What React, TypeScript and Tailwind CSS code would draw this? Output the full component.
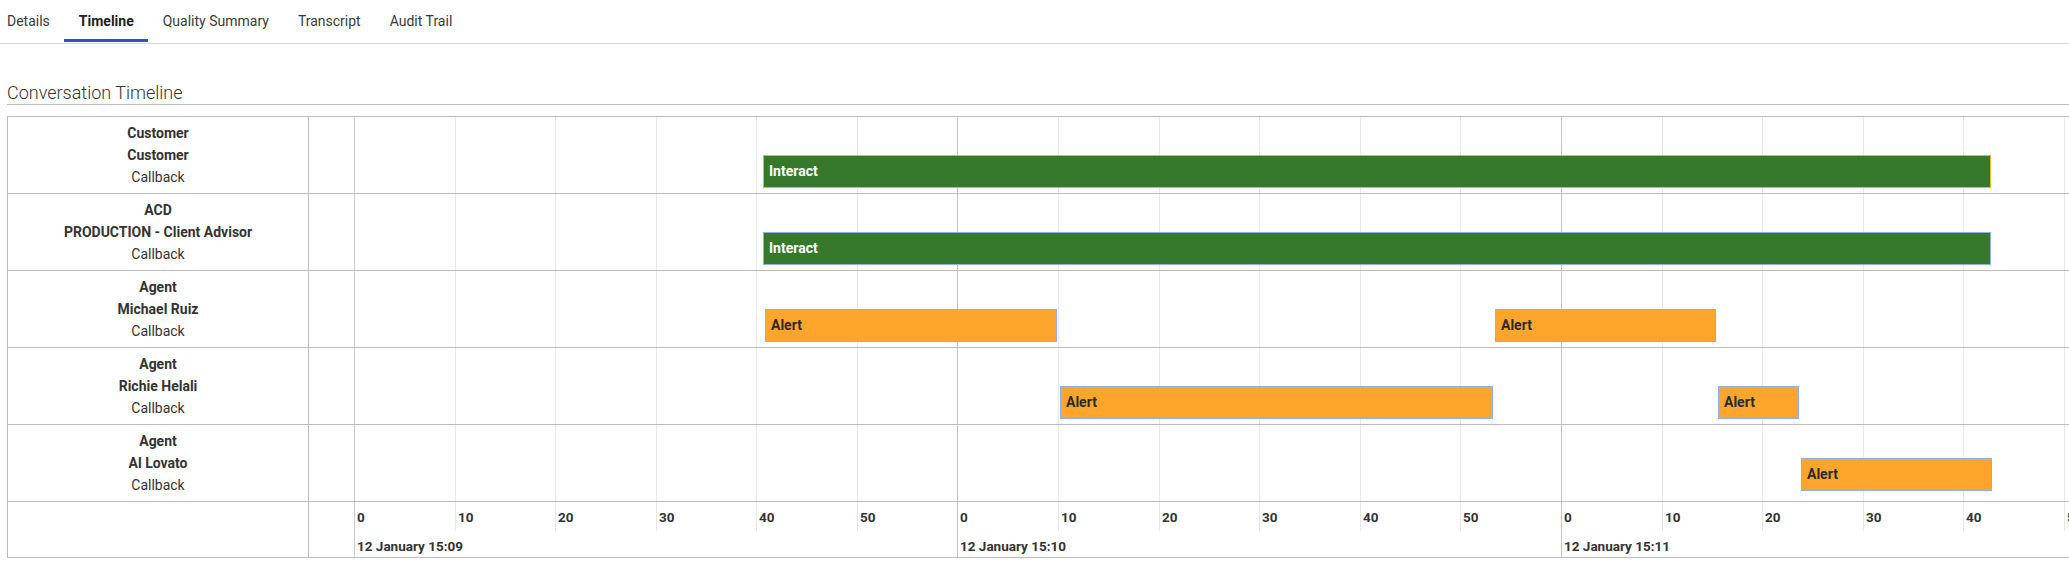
import React from "react";

// 10 seconds on the chart = ~100.58px, chart origin sits on the spacer's right border
const STEP = 100.58;
const TICKS = Array.from({ length: 18 }, (_, i) => i);
const DATES: Record<number, string> = { 0: "12 January 15:09", 6: "12 January 15:10", 12: "12 January 15:11" };

type Bar = { label: string; left: number; width: number; interact?: boolean; edge?: string };
type Row = { kind: string; name: string; top: string; bars: Bar[] };

const ROWS: Row[] = [
  { kind: "Customer", name: "Customer", top: "top-[38px]", bars: [{ label: "Interact", left: 408, width: 1228, interact: true, edge: "border-[#f4b324]" }] },
  { kind: "ACD", name: "PRODUCTION - Client Advisor", top: "top-[38px]", bars: [{ label: "Interact", left: 408, width: 1228, interact: true }] },
  {
    kind: "Agent",
    name: "Michael Ruiz",
    top: "top-[38px]",
    bars: [
      { label: "Alert", left: 410, width: 292 },
      { label: "Alert", left: 1140, width: 221 },
    ],
  },
  {
    kind: "Agent",
    name: "Richie Helali",
    top: "top-[38px]",
    bars: [
      { label: "Alert", left: 705, width: 433 },
      { label: "Alert", left: 1363, width: 81 },
    ],
  },
  { kind: "Agent", name: "Al Lovato", top: "top-[33px]", bars: [{ label: "Alert", left: 1446, width: 191 }] },
];

const tabs = ["Details", "Timeline", "Quality Summary", "Transcript", "Audit Trail"];

function Gridlines({ short }: { short?: boolean }) {
  return (
    <>
      {TICKS.filter((i) => i > 0).map((i) => {
        const major = i % 6 === 0;
        return (
          <div
            key={i}
            className={`absolute top-0 w-px ${major ? "bg-[#c4c4c4] bottom-0" : short ? "bg-[#e8e8e8] h-[29px]" : "bg-[#e8e8e8] bottom-0"}`}
            style={{ left: Math.round(i * STEP) - 1 }}
          />
        );
      })}
    </>
  );
}

function TimelineRow({ row }: { row: Row }) {
  return (
    <div className="flex h-[77px] border-b border-[#bdbdbd]">
      <div className="w-[301px] shrink-0 border-r border-[#bdbdbd] flex flex-col items-center justify-center text-[14px] leading-[22px] text-[#333]">
        <div className="font-bold">{row.kind}</div>
        <div className="font-bold">{row.name}</div>
        <div>Callback</div>
      </div>
      <div className="w-[46px] shrink-0 border-r border-[#cccccc]" />
      <div className="relative flex-1">
        <Gridlines />
        {row.bars.map((b, idx) => (
          <div
            key={idx}
            className={`absolute ${row.top} h-[33px] border px-[5px] text-[14px] font-bold leading-[31px] ${
              b.interact ? "bg-[#37792c] text-white" : "bg-[#fea52d] text-[#2b2b2b]"
            } ${b.edge ?? "border-[#8fb0ea]"}`}
            style={{ left: b.left, width: b.width }}
          >
            {b.label}
          </div>
        ))}
      </div>
    </div>
  );
}

export default function App() {
  return (
    <div className="w-full h-[567px] overflow-hidden bg-white font-['Roboto',sans-serif] text-[#333]">
      <div className="flex h-[44px] border-b border-[#d4d4d4] text-[14px]">
        {tabs.map((t, i) => (
          <div
            key={t}
            className={`relative flex items-center pr-[14px] ${i === 0 ? "pl-[7px]" : "pl-[15px]"} ${t === "Timeline" ? "font-bold text-[#222]" : "text-[#3a3a3a]"}`}
          >
            {t}
            {t === "Timeline" && <div className="absolute left-0 right-0 bottom-[1px] h-[3px] bg-[#2a55c2]" />}
          </div>
        ))}
      </div>

      <div className="ml-[7px] mt-[39px] h-[22px] border-b border-[#bdbdbd] text-[18px] font-light leading-[20px] text-[#333]">
        Conversation Timeline
      </div>

      <div className="ml-[7px] mt-[11px] w-[2200px] border-t border-l border-[#bdbdbd]">
        {ROWS.map((r, i) => (
          <TimelineRow key={i} row={r} />
        ))}
        <div className="flex h-[56px] border-b border-[#bdbdbd]">
          <div className="w-[301px] shrink-0 border-r border-[#bdbdbd]" />
          <div className="w-[46px] shrink-0 border-r border-[#cccccc]" />
          <div className="relative flex-1 text-[13.5px] font-bold text-[#333]">
            <Gridlines short />
            {TICKS.map((i) => (
              <React.Fragment key={i}>
                <div className="absolute top-[7px] leading-[16px]" style={{ left: Math.round(i * STEP) + 2 }}>
                  {(i % 6) * 10}
                </div>
                {DATES[i] && (
                  <div className="absolute top-[36px] leading-[16px] whitespace-nowrap" style={{ left: Math.round(i * STEP) + 2 }}>
                    {DATES[i]}
                  </div>
                )}
              </React.Fragment>
            ))}
          </div>
        </div>
      </div>
    </div>
  );
}
